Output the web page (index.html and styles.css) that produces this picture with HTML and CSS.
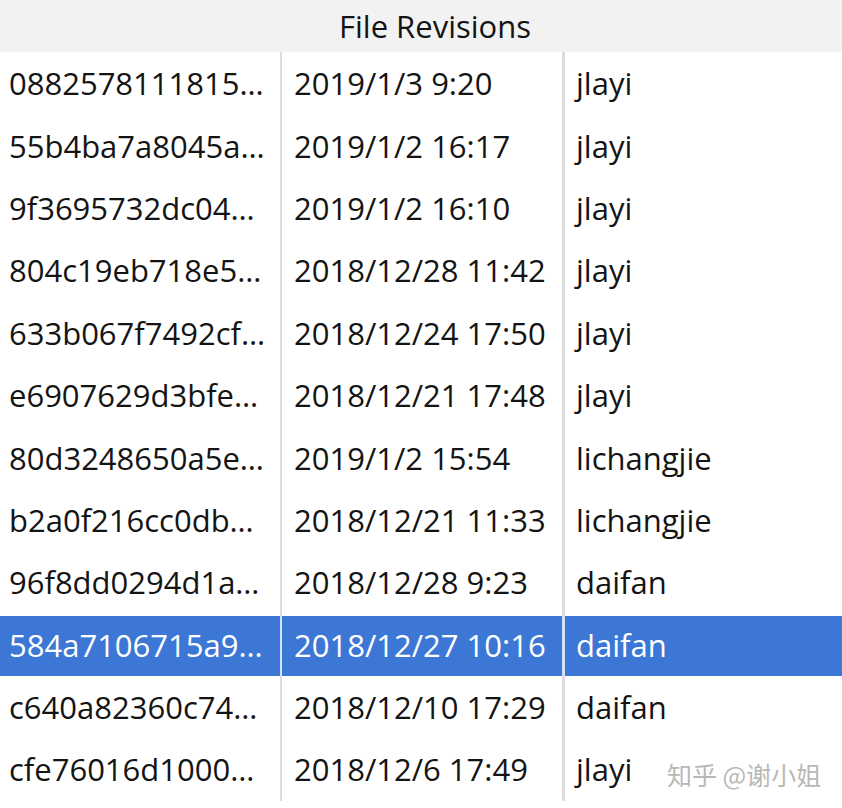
FILE: index.html
```html
<!DOCTYPE html>
<html>
<head>
<meta charset="utf-8">
<link rel="stylesheet" href="styles.css">
</head>
<body>
<div class="panel">
  <div class="header">File Revisions</div>
  <div class="table">
    <div class="row"><div class="cell c1">0882578111815…</div><div class="cell c2">2019/1/3 9:20</div><div class="cell c3">jlayi</div></div>
    <div class="row"><div class="cell c1">55b4ba7a8045a…</div><div class="cell c2">2019/1/2 16:17</div><div class="cell c3">jlayi</div></div>
    <div class="row"><div class="cell c1">9f3695732dc04…</div><div class="cell c2">2019/1/2 16:10</div><div class="cell c3">jlayi</div></div>
    <div class="row"><div class="cell c1">804c19eb718e5…</div><div class="cell c2">2018/12/28 11:42</div><div class="cell c3">jlayi</div></div>
    <div class="row"><div class="cell c1">633b067f7492cf…</div><div class="cell c2">2018/12/24 17:50</div><div class="cell c3">jlayi</div></div>
    <div class="row"><div class="cell c1">e6907629d3bfe…</div><div class="cell c2">2018/12/21 17:48</div><div class="cell c3">jlayi</div></div>
    <div class="row"><div class="cell c1">80d3248650a5e…</div><div class="cell c2">2019/1/2 15:54</div><div class="cell c3">lichangjie</div></div>
    <div class="row"><div class="cell c1">b2a0f216cc0db…</div><div class="cell c2">2018/12/21 11:33</div><div class="cell c3">lichangjie</div></div>
    <div class="row"><div class="cell c1">96f8dd0294d1a…</div><div class="cell c2">2018/12/28 9:23</div><div class="cell c3">daifan</div></div>
    <div class="row selected"><div class="cell c1">584a7106715a9…</div><div class="cell c2">2018/12/27 10:16</div><div class="cell c3">daifan</div></div>
    <div class="row"><div class="cell c1">c640a82360c74…</div><div class="cell c2">2018/12/10 17:29</div><div class="cell c3">daifan</div></div>
    <div class="row"><div class="cell c1">cfe76016d1000…</div><div class="cell c2">2018/12/6 17:49</div><div class="cell c3">jlayi</div></div>
  </div>
  <div class="watermark">知乎 @谢小姐</div>
</div>
</body>
</html>
```

FILE: styles.css
```css
html, body {
  margin: 0;
  padding: 0;
  background: #ffffff;
}
.panel {
  position: relative;
  width: 842px;
  height: 808px;
  overflow: hidden;
  font-family: "Open Sans", "Noto Sans", sans-serif;
  color: #141414;
}
.header {
  height: 52px;
  background: #f2f2f2;
  display: flex;
  align-items: center;
  justify-content: center;
  padding-left: 28px;
  box-sizing: border-box;
  font-size: 31px;
}
.table {
  display: flex;
  flex-direction: column;
}
.row {
  display: flex;
  height: 62.4px;
  font-size: 31px;
}
.cell {
  display: flex;
  align-items: center;
  box-sizing: border-box;
  white-space: nowrap;
  overflow: hidden;
}
.c1 {
  width: 282px;
  padding-left: 9px;
  border-right: 2px solid #dcdcdc;
}
.c2 {
  width: 283px;
  padding-left: 12px;
  border-right: 3px solid #dcdcdc;
}
.c3 {
  flex: 1;
  padding-left: 11px;
}
.selected {
  background: #3c77d6;
  color: #ffffff;
  box-shadow: inset 0 2px 0 #ffffff;
}
.selected .c1 {
  border-right-color: #d4e0f4;
}
.selected .c2 {
  border-right-color: #d4e0f4;
}
.watermark {
  position: absolute;
  left: 667px;
  top: 756px;
  font-family: "Noto Sans CJK SC", sans-serif;
  font-size: 25px;
  color: #b8b8b8;
}
```
